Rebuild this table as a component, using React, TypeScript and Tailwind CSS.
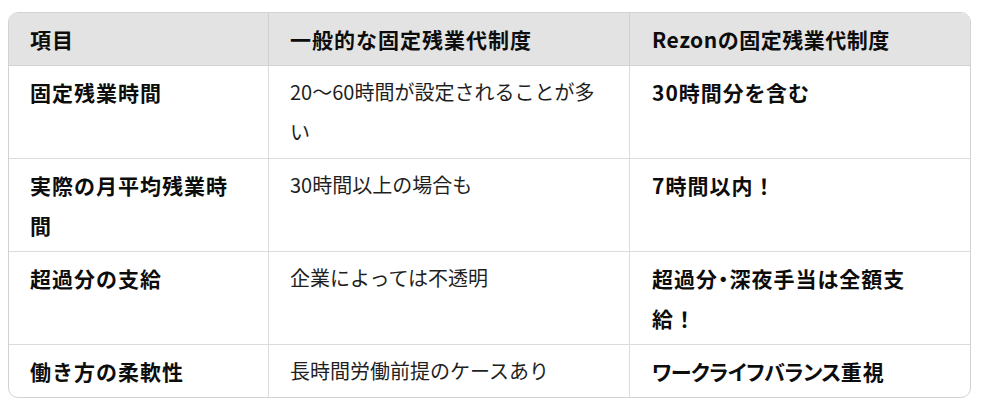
import React from "react";

const Ex = () => <span className="[font-feature-settings:normal]">！</span>;

const rows: [string, string, React.ReactNode][] = [
  ["固定残業時間", "20〜60時間が設定されることが多い", "30時間分を含む"],
  ["実際の月平均残業時間", "30時間以上の場合も", <>7時間以内<Ex /></>],
  [
    "超過分の支給",
    "企業によっては不透明",
    <>
      超過分・深夜手当は全額支
      <br />
      給<Ex />
    </>,
  ],
  [
    "働き方の柔軟性",
    "長時間労働前提のケースあり",
    <>
      <span className="tracking-[-0.5px]">ワークライフバランス</span>重視
    </>,
  ],
];

const font = { fontFamily: '"Noto Sans CJK JP", "Noto Sans", sans-serif' };

export default function App() {
  return (
    <div className="w-[987px] h-[412px] bg-white pt-[12px] pl-[8px]" style={font}>
      <div className="w-[963px] rounded-[10px] border border-[#d2d2d2] overflow-hidden text-[#0d0d0d]">
        <div className="grid grid-cols-[260px_361px_340px] bg-[#e3e3e3] border-b border-[#d2d2d2]">
          <div className="border-r border-[#cfcfcf] px-[21px] py-[6px] leading-[40px] text-[21px] font-semibold tracking-[1px]">項目</div>
          <div className="border-r border-[#cfcfcf] px-[21px] py-[6px] leading-[40px] text-[21px] font-semibold tracking-[1px]">一般的な固定残業代制度</div>
          <div className="px-[22px] py-[6px] leading-[40px] text-[21px] font-semibold tracking-[0.5px]">Rezonの固定残業代制度</div>
        </div>
        {rows.map((r, i) => (
          <div
            key={i}
            className={`grid grid-cols-[260px_361px_340px] ${i < rows.length - 1 ? "border-b border-[#dcdcdc]" : ""}`}
          >
            <div className="border-r border-[#dcdcdc] px-[21px] py-[6px] leading-[40px] text-[21px] font-semibold tracking-[1px]">{r[0]}</div>
            <div className="border-r border-[#dcdcdc] px-[21px] py-[6px] leading-[40px] text-[20px] font-normal text-[#1f1f1f]">{r[1]}</div>
            <div className="px-[22px] py-[6px] leading-[40px] text-[21px] font-semibold tracking-[1px] [font-feature-settings:'palt']">{r[2]}</div>
          </div>
        ))}
      </div>
    </div>
  );
}
